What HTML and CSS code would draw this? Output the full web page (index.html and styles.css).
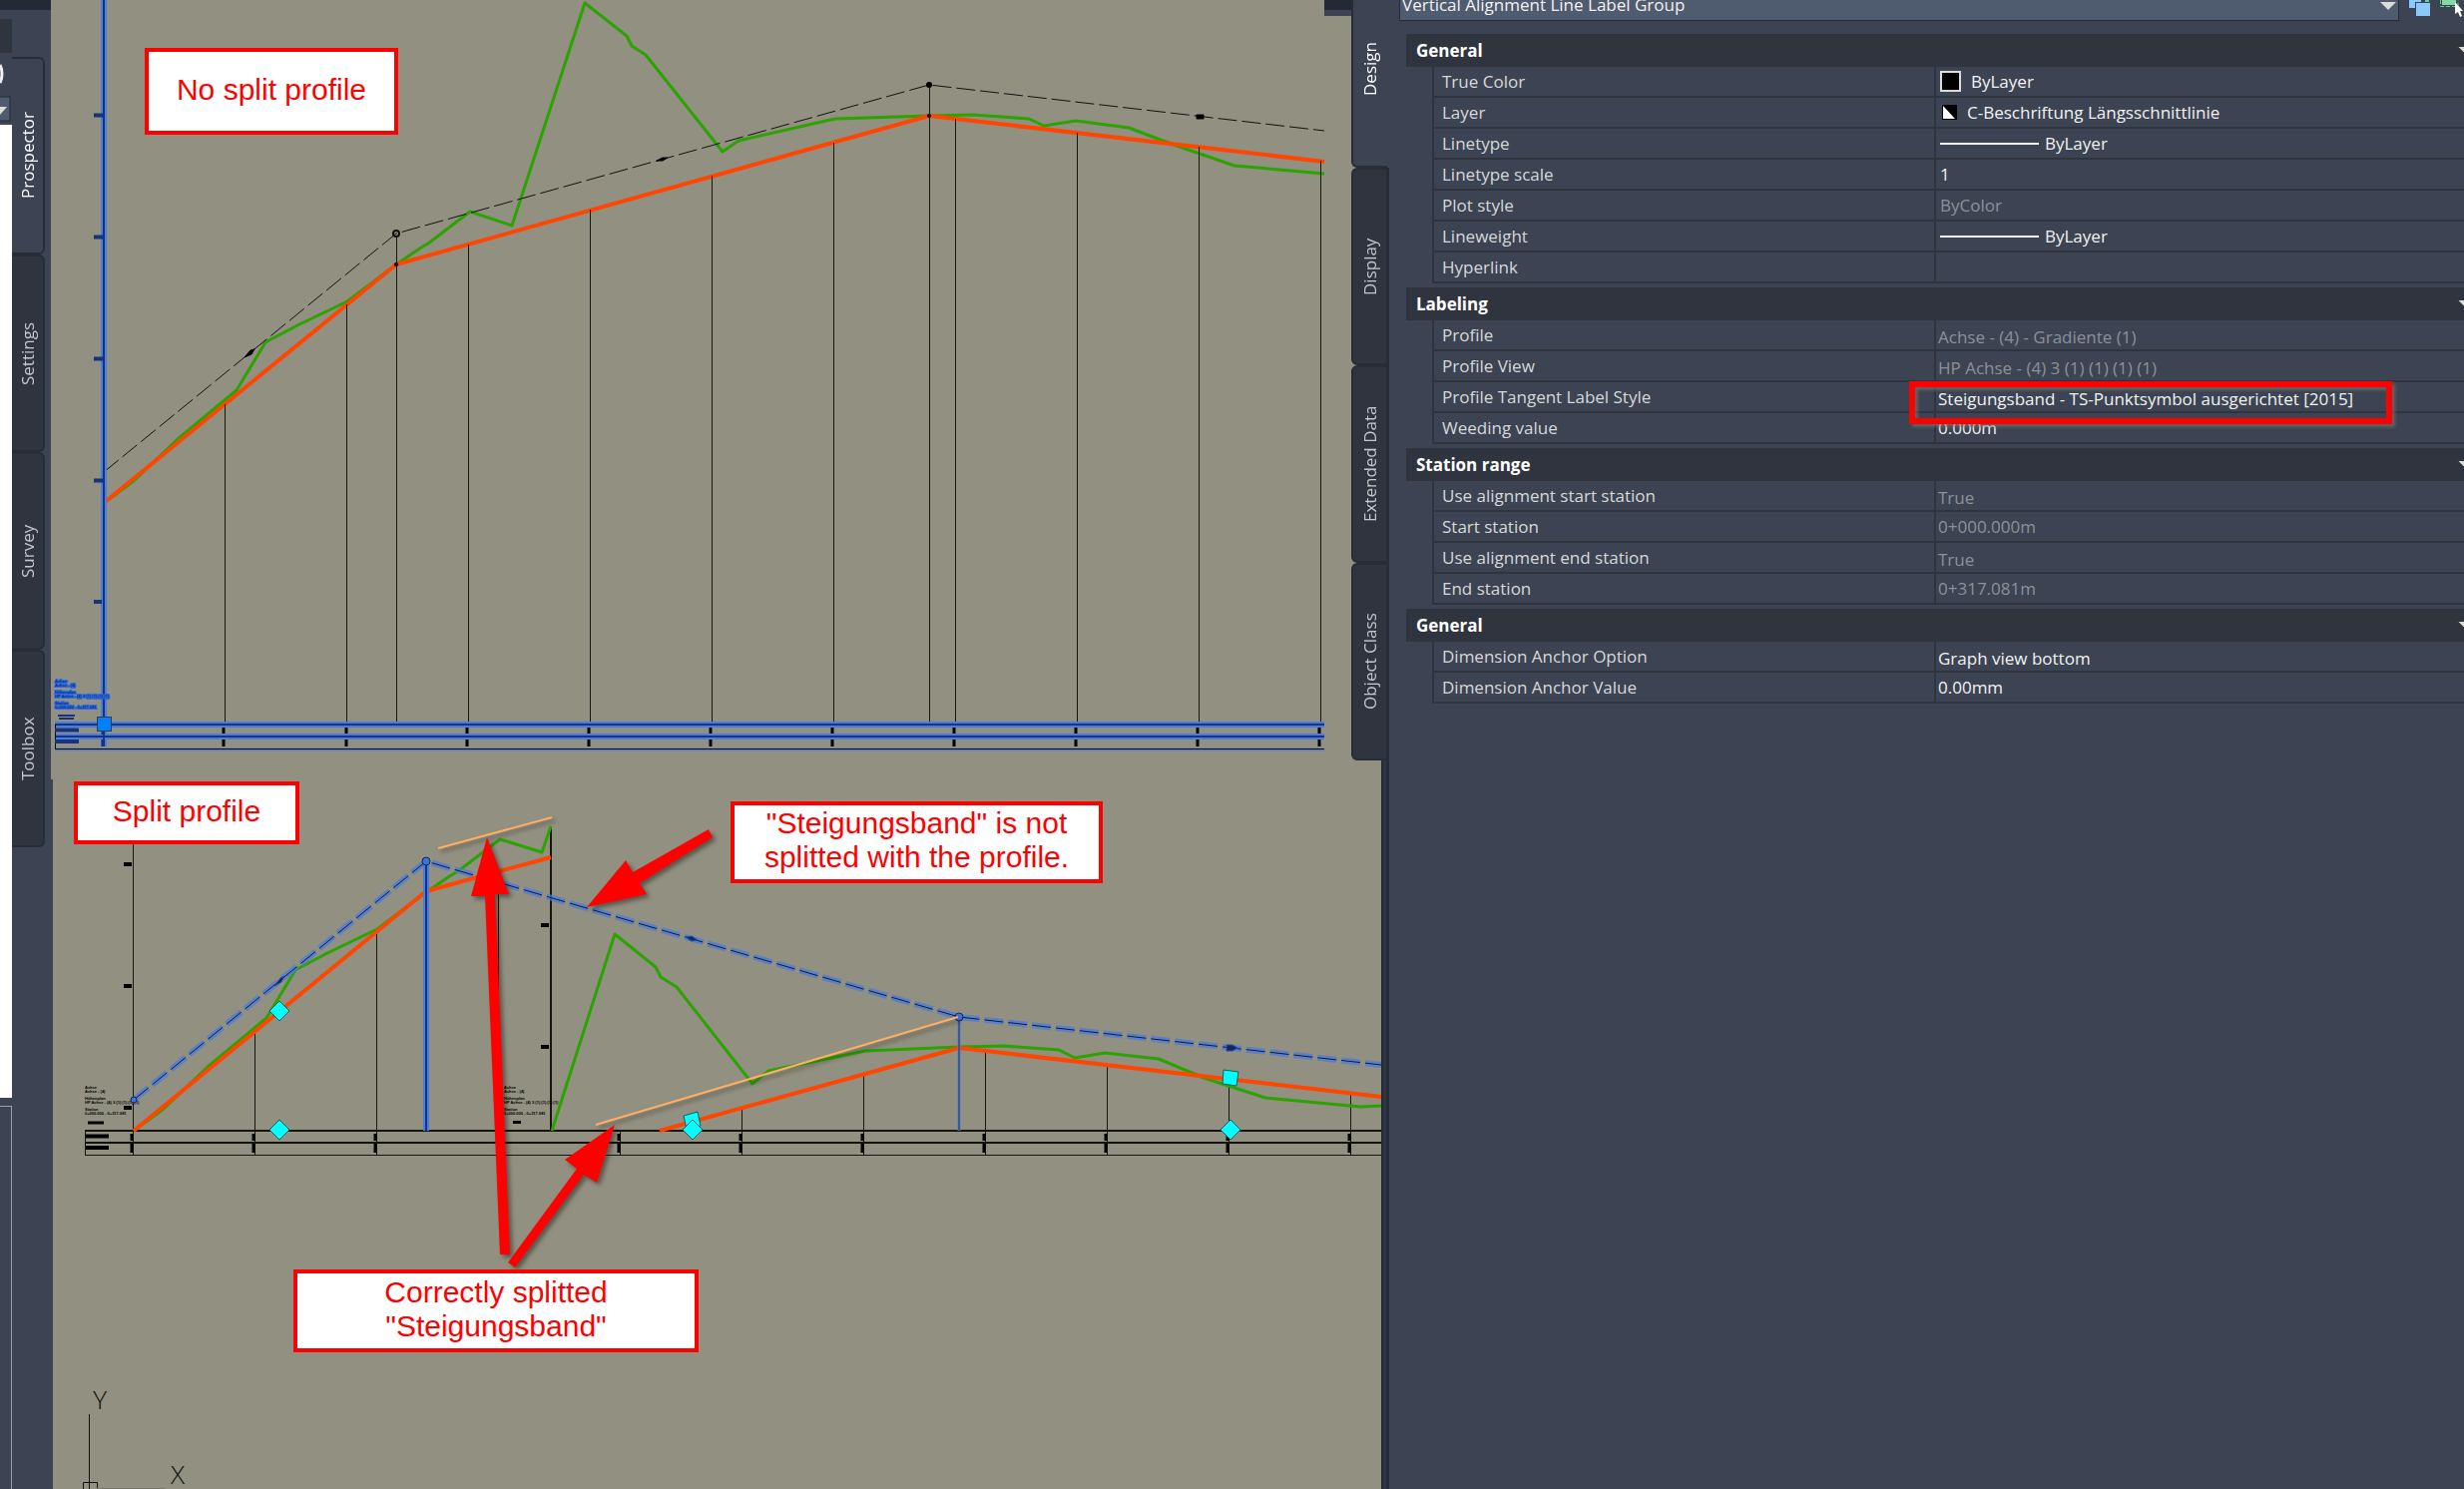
FILE: index.html
```html
<!DOCTYPE html>
<html lang="en">
<head>
<meta charset="utf-8">
<title>Profile view – Properties</title>
<link rel="stylesheet" href="styles.css">
</head>
<body>
<div class="app">
  <aside class="toolspace">
    <div class="tree">
      <div class="tree-head"></div>
      <div class="tree-tools">
        <svg width="12" height="72" viewBox="0 0 12 72" aria-hidden="true">
          <path d="M0 12q2 4 2 9t-2 9" fill="none" stroke="#f0f0f0" stroke-width="3"/>
          <rect x="-2" y="44" width="12" height="24" fill="#4f5b6e" stroke="#232a36"/>
          <path d="M-7 54H7L0 62z" fill="#dcdcdc"/>
        </svg>
      </div>
      <div class="tree-list"></div>
      <div class="tree-detail"></div>
    </div>
    <nav class="tabs tabs-left">
      <button class="tab active">Prospector</button>
      <button class="tab">Settings</button>
      <button class="tab">Survey</button>
      <button class="tab">Toolbox</button>
    </nav>
  </aside>

  <main class="drawing">
    <svg class="profiles" viewBox="51 0 1303 1492" role="img" aria-label="Profile views">
      <defs>
        <g id="title-text">
          <text x="0" y="0">Achse</text>
          <text x="0" y="4">Achse - (4)</text>
          <text x="0" y="11">Höhenplan</text>
          <text x="0" y="15">HP Achse - (4) 3 (1) (1) (1) (1)</text>
          <text x="0" y="22">Station</text>
          <text x="0" y="26">0+000.000 - 0+317.081</text>
        </g>
      </defs>
      <rect x="51" y="781" width="2" height="711" fill="#3c4453"/>
      <rect x="1327" y="0" width="28" height="10" fill="#232a36"/>
      <rect x="1327" y="10" width="28" height="6" fill="#3c4453"/>

      <!-- upper profile view -->
      <path class="green" d="M104 504L134 482L178 440L237 391L266 343L298 326L348 302L397 265L422 248L429 244L471 212L513 226L586 3L628 36L633 46L647 55L724 152L740 141L832 120L838 119L931 116L975 115L1031 119L1046 126L1078 121L1131 128L1176 145L1237 166L1327 174"/>
      <path class="orange" d="M104 504L397 265L931 116L1327 162"/>
      <path class="dash" d="M104 473L397 234L931 85L1327 131"/>
      <circle class="ring" cx="397" cy="234" r="3"/><circle cx="931" cy="85" r="3"/>
      <circle cx="397" cy="265" r="2"/><circle cx="931" cy="116" r="2"/>
      <path class="mark" d="M245 358l6-7 4-1-3 5zM658 161l6-3h5l-5 3zM1199 115h7v4h-7z"/>
      <path class="station" d="M225.500 405V724M347.500 305V724M397.500 238V724M469.500 245V724M591.500 210V724M713.500 176V724M835.500 143V724M931.500 88V724M957.500 119V724M1079.500 133V724M1201.500 147V724M1323.500 161V724"/>
      <g class="band-ticks">
        <path d="M224 729v7m0 5v7M347 729v7m0 5v7M468 729v7m0 5v7M590 729v7m0 5v7M712 729v7m0 5v7M834 729v7m0 5v7M956 729v7m0 5v7M1078 729v7m0 5v7M1200 729v7m0 5v7M1322 729v7m0 5v7"/>
      </g>
      <path class="halo" d="M104 0V748M55 726H1327M55 738H1327"/>
      <path class="halo thin" d="M55 751H1327"/>
      <path class="core" d="M104 0V748M55 726H1327M55 738H1327"/>
      <path d="M55 750.500H1327M55.500 726V750" stroke="#0a1020" fill="none"/>
      <path d="M94 115.500h10M94 237.500h10M94 359.500h10M94 481.500h10M94 603h8M55 731.500h24M55 743h24" stroke="#17337c" stroke-width="4"/>
      <path d="M103 729v7m0 5v7" stroke="#17337c" stroke-width="3"/>
      <use href="#title-text" x="55" y="684" class="tiny tiny-glow"/>
      <path d="M58 717h17M59 720h15" stroke="#17337c" stroke-width="2"/>
      <rect x="97.500" y="718.500" width="14" height="14" fill="#007fff" stroke="#333c50"/>

      <!-- lower profile view, split -->
      <path class="station" d="M133.500 846V1157M255.500 1033V1157M377.500 934V1157M499.500 895V1157M552 828V1133M621.500 1133V1157M743.500 1110V1157M865.500 1076V1157M987.500 1052V1157M1109.500 1066V1157M1231.500 1080V1157M1353.500 1094V1157"/>
      <path class="station strong" d="M85 1133H1384M85 1145H1384M552 828V1133"/>
      <path class="station" d="M85 1157.500H1384M85.500 1133V1157"/>
      <g class="band-ticks">
        <path d="M132 1136v7m0 3v9M254 1136v7m0 3v9M376 1136v7m0 3v9M620 1136v7m0 3v9M742 1136v7m0 3v9M864 1136v7m0 3v9M986 1136v7m0 3v9M1108 1136v7m0 3v9M1230 1136v7m0 3v9M1352 1136v7m0 3v9"/>
      </g>
      <path d="M124 866h8M124 988h8M124 1110h8M542 927h8M542 1049h8M86 1138.500h23M86 1150h23" stroke="#000" stroke-width="4"/>
      <path d="M88 1125h16M514 1124.500h8" stroke="#000" stroke-width="3"/>
      <use href="#title-text" x="85" y="1091" class="tiny"/>
      <use href="#title-text" x="505" y="1091" class="tiny"/>
      <path class="green" d="M134 1133L164 1111L208 1069L267 1020L296 972L328 955L378 931L427 894L452 877L459 873L501 841L543 854L552 828"/>
      <path class="green" d="M553 1133L616 936L657 969L662 979L678 989L754 1086L770 1073L862 1054L868 1053L961 1049L1006 1048L1061 1052L1077 1060L1107 1055L1161 1061L1206 1080L1268 1100L1342 1107L1364 1109L1384 1108"/>
      <path class="orange" d="M134 1133L427 893L552 859M661 1133L961 1050L1384 1099"/>
      <path class="halo" d="M427 863V1133"/><path class="core" d="M427 863V1133"/>
      <path class="halo thin" d="M961 1019V1133"/><path class="core slim" d="M961 1019V1133"/>
      <path class="dash-halo" d="M134 1102L427 863L961 1019L1384 1067"/>
      <path class="dash-core" d="M134 1102L427 863L961 1019L1384 1067"/>
      <path d="M275 988l6-8 4-2-3 6zM687 939l6-1 6 4-6 1zM1229 1047h6l5 3-5 3h-6z" fill="#12285c" stroke="#244fa8"/>
      <g fill="#3b72dc" stroke="#12285c"><circle cx="427" cy="863" r="4"/><circle cx="961" cy="1019" r="4"/><circle cx="134" cy="1102" r="3"/></g>
      <g class="grips">
        <path d="M280 1003l10 10-10 10-10-10zM280 1122l10 10-10 10-10-10zM1233 1122l10 10-10 10-10-10z"/>
        <path d="M1226 1072l15 2-2 14-14-2z"/>
        <path d="M685 1118l14-4 3 14-14 4z"/>
        <path d="M694 1122l10 10-10 10-10-10z"/>
      </g>
      <g class="sketch">
        <path d="M439 850L553 819M597 1127L960 1019" fill="none" stroke="#ffae62" stroke-width="2"/>
        <path d="M488 839L510 896L496 896L511 1257H501L486 898L472 898z"/>
        <path d="M588 909L627 862L634 874L710 831L714 839L641 885L648 896z"/>
        <path d="M616 1127L598 1185L585 1177L516 1270L509 1265L578 1171L566 1162z"/>
      </g>

      <!-- coordinate system icon -->
      <path d="M89.500 1417V1492M83.500 1492V1485.500H97.500V1492" fill="none" stroke="#111"/>
      <path d="M97 1491.500H165" stroke="#77766a"/>
      <text class="ucs" x="100" y="1412">Y</text>
      <text class="ucs" x="178" y="1487">X</text>
    </svg>
    <div class="callout note-top">No split profile</div>
    <div class="callout note-split">Split profile</div>
    <div class="callout note-band">"Steigungsband" is not<br>splitted with the profile.</div>
    <div class="callout note-correct">Correctly splitted<br>"Steigungsband"</div>
  </main>

  <aside class="properties">
    <div class="rail">
      <nav class="tabs tabs-right">
        <button class="tab active">Design</button>
        <button class="tab">Display</button>
        <button class="tab">Extended Data</button>
        <button class="tab">Object Class</button>
      </nav>
      <div class="rail-edge"></div>
    </div>
    <div class="panel">
      <div class="picker">
        <div class="picker-box">
          <select aria-label="Object type"><option>Vertical Alignment Line Label Group</option></select>
          <svg class="caret" width="16" height="8" viewBox="0 0 16 8" aria-hidden="true"><path d="M0 0H16L8 8z" fill="#dcdcdc"/></svg>
        </div>
        <button class="tool" aria-label="Toggle pick add">
          <svg width="24" height="30" viewBox="0 0 24 30"><path d="M2 6h12v12H2z" fill="#8cc8fa"/><path d="M18 6h4v7h-4z" fill="#5fd38a"/><path d="M8 12h16v16H8z" fill="#3c4453"/><path d="M9 13h14v13H9z" fill="#8cc8fa"/></svg>
        </button>
        <button class="tool" aria-label="Select objects">
          <svg width="24" height="30" viewBox="0 0 24 30"><path d="M3 4h14v11H3z" fill="#82dba0"/><path d="M1.500 4V16.500H19V4" fill="none" stroke="#5fd38a" stroke-dasharray="4 2"/><path d="M16 12v12l3-2 2 5 2-1-2-5h3z" fill="#fff"/></svg>
        </button>
      </div>

      <section class="group">
        <button class="group-head">General<i></i></button>
        <table>
          <tr><th scope="row">True Color</th><td><span class="value"><b class="swatch"></b>ByLayer</span></td></tr>
          <tr><th scope="row">Layer</th><td><span class="value layer"><svg width="15" height="15" viewBox="0 0 15 15" aria-hidden="true"><path d="M0 0h15v15H0z"/><path d="M1 1V14H13z" fill="#fff"/></svg>C-Beschriftung Längsschnittlinie</span></td></tr>
          <tr><th scope="row">Linetype</th><td><span class="value"><b class="line"></b>ByLayer</span></td></tr>
          <tr><th scope="row">Linetype scale</th><td><span class="value">1</span></td></tr>
          <tr class="locked"><th scope="row">Plot style</th><td><span class="value">ByColor</span></td></tr>
          <tr><th scope="row">Lineweight</th><td><span class="value"><b class="line"></b>ByLayer</span></td></tr>
          <tr><th scope="row">Hyperlink</th><td></td></tr>
        </table>
      </section>

      <section class="group">
        <button class="group-head">Labeling<i></i></button>
        <table>
          <tr class="locked"><th scope="row">Profile</th><td class="choice">Achse - (4) - Gradiente (1)</td></tr>
          <tr class="locked"><th scope="row">Profile View</th><td class="choice">HP Achse - (4) 3 (1) (1) (1) (1)</td></tr>
          <tr><th scope="row">Profile Tangent Label Style</th><td class="choice marked">Steigungsband - TS-Punktsymbol ausgerichtet [2015]<span class="highlight"></span></td></tr>
          <tr><th scope="row">Weeding value</th><td>0.000m</td></tr>
        </table>
      </section>

      <section class="group">
        <button class="group-head">Station range<i></i></button>
        <table>
          <tr class="locked"><th scope="row">Use alignment start station</th><td class="choice">True</td></tr>
          <tr class="locked"><th scope="row">Start station</th><td>0+000.000m</td></tr>
          <tr class="locked"><th scope="row">Use alignment end station</th><td class="choice">True</td></tr>
          <tr class="locked"><th scope="row">End station</th><td>0+317.081m</td></tr>
        </table>
      </section>

      <section class="group">
        <button class="group-head">General<i></i></button>
        <table>
          <tr><th scope="row">Dimension Anchor Option</th><td class="choice">Graph view bottom</td></tr>
          <tr><th scope="row">Dimension Anchor Value</th><td>0.00mm</td></tr>
        </table>
      </section>
    </div>
  </aside>
</div>
</body>
</html>
```
FILE: styles.css
```css
* { box-sizing: border-box; }

body {
  margin: 0;
  background: #929080;
  font-family: "Open Sans", "Noto Sans", sans-serif;
  font-size: 17px;
  color: #f2f2f2;
  overflow: hidden;
}

button {
  margin: 0;
  padding: 0;
  border: 0;
  background: none;
  color: inherit;
  font: inherit;
}

.app {
  display: grid;
  grid-template-columns: 51px 1303fr 1115fr;
  min-height: 100vh;
}

/* left palette */
.toolspace {
  display: flex;
  background: #3c4453;
  border-top: 10px solid #232a36;
}

.tree {
  display: flex;
  flex-direction: column;
  width: 12px;
  padding-top: 9px;
}

.tree-head { height: 34px; background: #2f343f; }
.tree-tools { height: 72px; }
.tree-tools svg { display: block; }
.tree-list { flex: 976 0 0; background: #fff; }
.tree-detail {
  flex: 383 0 0;
  margin-top: 8px;
  border-top: 1px solid #9a9fa8;
  border-right: 1px solid #9a9fa8;
}

.tabs { display: flex; flex-direction: column; }
.tabs-left { width: 33px; padding-top: 47px; }

.tab {
  display: flex;
  align-items: center;
  justify-content: center;
  height: 198px;
  border: 2px solid #262c38;
  background: #2f343f;
  color: #c4c7cb;
  font-size: 17px;
  line-height: 24px;
  writing-mode: vertical-rl;
  transform: rotate(180deg);
}

.tab.active { background: #3c4453; color: #fff; }
.tabs-left .tab { border-right: 0; border-radius: 6px 0 0 6px; }

/* drawing area */
.drawing { position: relative; }

.profiles { display: block; width: 100%; overflow: visible; }
.green, .orange { fill: none; stroke-width: 3; stroke-linejoin: round; }
.green { stroke: #2ba300; }
.orange { stroke: #ff4500; stroke-width: 4; }
.dash { fill: none; stroke: #111; stroke-dasharray: 19 5; stroke-width: 1; }
.ring { fill: none; stroke: #111; stroke-width: 2; }
.mark { stroke: #000; }
.station { fill: none; stroke: #15150f; }
.strong { stroke-width: 2; }
.band-ticks { stroke: #000; stroke-width: 3; }
.halo { fill: none; stroke: #4a7be0; stroke-width: 6; }
.halo.thin { stroke: #5d7fb8; stroke-width: 3; }
.core { fill: none; stroke: #16357c; stroke-width: 2; }
.core.slim { stroke-width: 1; }
.dash-halo, .dash-core { fill: none; stroke-dasharray: 19 5; }
.dash-halo { stroke: #4a7bdc; stroke-width: 6; opacity: .75; }
.dash-core { stroke: #0c1a3c; stroke-width: 1; }
.grips { fill: #0ff; stroke: #14585c; }
.sketch { fill: #f00; filter: drop-shadow(3px 3px 2px rgba(0, 0, 0, .4)); }
.tiny { font: bold 4px "Liberation Sans", sans-serif; fill: #000; }
.tiny-glow { fill: #0c2c80; stroke: #2f6ce0; stroke-width: 2; paint-order: stroke; }
.ucs { font: 300 26px "Open Sans", sans-serif; fill: #111; text-anchor: middle; }

.callout {
  position: absolute;
  display: flex;
  align-items: center;
  justify-content: center;
  padding-bottom: 4px;
  border: 4px solid #f00;
  background: #fff;
  color: #f00;
  font-family: "Liberation Sans", Arial, sans-serif;
  font-size: 30px;
  line-height: 34px;
  text-align: center;
}

.note-top { left: 94px; top: 48px; width: 254px; height: 87px; }
.note-split { left: 23px; top: 783px; width: 226px; height: 63px; }
.note-band { left: 681px; top: 803px; width: 373px; height: 82px; }
.note-correct { left: 243px; top: 1272px; width: 406px; height: 83px; }

/* properties palette */
.properties {
  position: relative;
  display: flex;
  min-width: 0;
  overflow: hidden;
}

.rail {
  display: flex;
  flex-direction: column;
  align-items: flex-end;
  width: 38px;
}

.tabs-right { width: 38px; margin-top: -30px; }
.tabs-right .tab { border-left: 3px solid #262c38; border-radius: 0 6px 6px 0; }
.tabs-right .tab.active { border-left-color: #3c4453; }

.rail-edge {
  flex: 1;
  width: 8px;
  border: solid #262c38;
  border-width: 0 3px 0 2px;
  background: #2f3643;
}

.panel {
  flex: 1;
  min-width: 0;
  padding-left: 10px;
  background: #3c4453;
}

.picker { display: flex; margin-top: -10px; height: 44px; }

.picker-box {
  position: relative;
  flex: 1;
  height: 31px;
}

.picker select {
  width: 100%;
  height: 31px;
  padding: 0 2px 2px;
  border: 1px solid #262c38;
  border-radius: 0;
  background: #4f5b6e;
  color: #f2f2f2;
  font: inherit;
  appearance: none;
}

.caret { position: absolute; right: 3px; top: 12px; }
.tool { width: 24px; height: 30px; margin-left: 8px; }
.tool + .tool { margin-right: 1px; }
.tool svg { display: block; }

.group { margin: 0 0 4px 7px; }

.group-head {
  display: flex;
  align-items: center;
  justify-content: space-between;
  width: 100%;
  height: 33px;
  padding-left: 10px;
  background: #2f343f;
  color: #fff;
  font-weight: 700;
}

.group-head i {
  width: 16px;
  height: 8px;
  margin-right: -10px;
  background: #dcdcdc;
  clip-path: polygon(0 0, 100% 0, 50% 100%);
}

table {
  width: calc(100% - 26px);
  margin-left: 26px;
  border-left: 2px solid #2f343f;
  border-spacing: 0;
  table-layout: fixed;
}

th, td {
  height: 31px;
  padding: 0;
  border-bottom: 2px solid #2f343f;
  line-height: 24px;
  text-align: left;
  white-space: nowrap;
}

th {
  width: 503px;
  padding-left: 8px;
  border-right: 2px solid #2f343f;
  color: #d6d8da;
  font-weight: 400;
}

td { padding-left: 2px; }
.choice { padding-top: 4px; }
.locked td { color: #8c9199; }

.value {
  display: flex;
  align-items: center;
  padding-left: 2px;
}

.layer { padding-left: 4px; }
.layer svg { margin-right: 10px; }

.swatch {
  width: 21px;
  height: 21px;
  margin-right: 10px;
  border: 2px solid #dcdcdc;
  background: #000;
}

.line {
  width: 99px;
  height: 2px;
  margin-right: 6px;
  background: #f2f2f2;
}

.marked { position: relative; }

.highlight {
  position: absolute;
  left: -27px;
  top: -1px;
  width: 484px;
  height: 43px;
  border: 6px solid #f00;
  box-shadow: 3px 3px 3px rgba(120, 120, 110, .6), inset 3px 3px 3px rgba(120, 120, 110, .6);
}
```
